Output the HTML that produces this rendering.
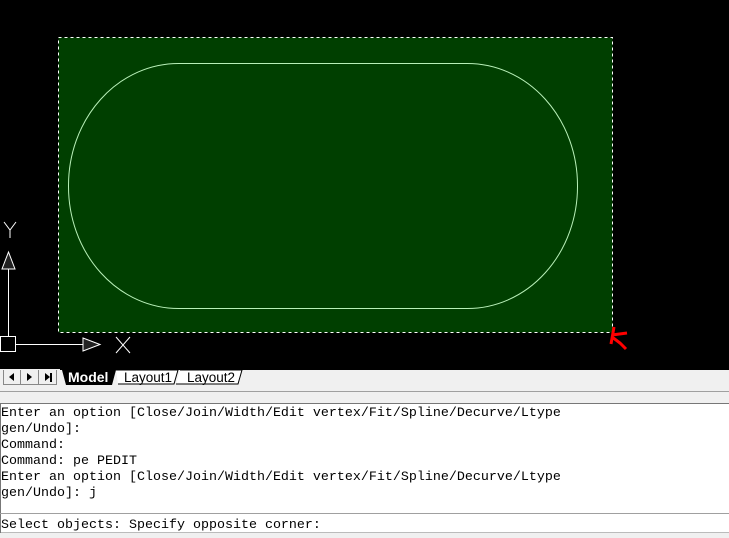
<!DOCTYPE html>
<html><head><style>
body{margin:0;width:729px;height:538px;overflow:hidden;background:#000;position:relative;font-family:"Liberation Sans",sans-serif}
.mono{font-family:"Liberation Mono",monospace;font-size:13.33px;color:#000;position:absolute;left:1px;white-space:pre;line-height:16px}
</style></head><body>
<svg width="729" height="370" style="position:absolute;left:0;top:0">
<rect x="58.5" y="37.5" width="554" height="295" fill="#003f00" stroke="#fff" stroke-dasharray="3,3"/>
<rect x="68.5" y="63.5" width="509" height="245" rx="110" ry="122" fill="none" stroke="#b8f0b8" stroke-width="1"/>
<line x1="8.5" y1="268" x2="8.5" y2="337" stroke="#fff"/>
<polygon points="8.5,252 2,269 15,269" fill="#222" stroke="#fff"/>
<rect x="0.5" y="336.5" width="15" height="15" fill="none" stroke="#fff"/>
<line x1="16" y1="344.5" x2="84" y2="344.5" stroke="#fff"/>
<polygon points="100,344.5 83,338 83,351" fill="#222" stroke="#fff"/>
<path d="M4 222 L10 230 L16 222 M10 230 L10 238" stroke="#fff" fill="none"/>
<path d="M116 337 L130 353 M130 337 L116 353" stroke="#fff" fill="none"/>
<path d="M614 327 L611 344 M612 335 L627 333 M612 337 L620 343 L626 349" stroke="#f00" stroke-width="3" fill="none"/>
</svg>
<div style="position:absolute;left:0;top:370px;width:729px;height:168px;background:#f0f0f0"></div>
<svg width="260" height="16" style="position:absolute;left:0;top:369px">
<rect x="0" y="0" width="60" height="16" fill="#f0f0f0"/>
<g stroke="#888"><line x1="3.5" y1="1" x2="3.5" y2="15"/><line x1="20.5" y1="1" x2="20.5" y2="15"/><line x1="38.5" y1="1" x2="38.5" y2="15"/><line x1="56.5" y1="1" x2="56.5" y2="15"/><line x1="3" y1="15.5" x2="57" y2="15.5"/></g>
<polygon points="9,8 14,4 14,12" fill="#000"/>
<polygon points="32,8 27,4 27,12" fill="#000"/>
<polygon points="50,8 45,4 45,12" fill="#000"/><rect x="50" y="4" width="2" height="9" fill="#000"/>
<polygon points="62,1 116,1 112,16 66,16" fill="#000"/>
<text x="68" y="13" font-family="Liberation Sans" font-weight="bold" font-size="14" fill="#fff">Model</text>
<path d="M116,1 L178,1 L174,15 L118,15" fill="#fff" stroke="#000"/>
<text x="124" y="13" font-family="Liberation Sans" font-size="13.5" fill="#000">Layout1</text>
<path d="M180,1 L242,1 L238,15 L176,15" fill="#fff" stroke="#000"/>
<text x="187" y="13" font-family="Liberation Sans" font-size="13.5" fill="#000">Layout2</text>
</svg>
<div style="position:absolute;left:0;top:391px;width:729px;height:1px;background:#a0a0a0"></div>
<div style="position:absolute;left:0;top:403px;width:729px;height:130px;background:#fff;border-top:1px solid #777;border-bottom:1px solid #bbb;box-sizing:border-box"></div>
<div style="position:absolute;left:0;top:403px;width:1px;height:130px;background:#777"></div>
<div style="position:absolute;left:0;top:513px;width:729px;height:1px;background:#a0a0a0"></div>
<div class="mono" style="top:406px">Enter an option [Close/Join/Width/Edit vertex/Fit/Spline/Decurve/Ltype
gen/Undo]:
Command:
Command: pe PEDIT
Enter an option [Close/Join/Width/Edit vertex/Fit/Spline/Decurve/Ltype
gen/Undo]: j</div>
<div class="mono" style="top:518px">Select objects: Specify opposite corner:</div>
</body></html>
